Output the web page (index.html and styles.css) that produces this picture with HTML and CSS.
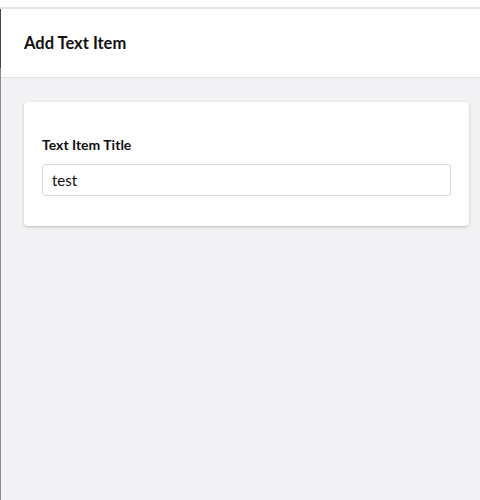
FILE: index.html
```html
<!DOCTYPE html>
<html lang="en">
<head>
    <meta charset="UTF-8">
    <meta name="viewport" content="width=device-width, initial-scale=1.0">
    <title>Add Text Item</title>
    <link rel="stylesheet" href="styles.css">
</head>
<body>
    <div class="top-strip"></div>
    <div class="shell">
        <div class="side-edge"></div>
        <main class="content">
            <header class="page-header">
                <h1 class="page-title">Add Text Item</h1>
            </header>
            <section class="page-body">
                <form class="card">
                    <label class="field-label" for="item-title">Text Item Title</label>
                    <input class="field-input" id="item-title" type="text" value="test">
                </form>
            </section>
        </main>
    </div>
</body>
</html>
```

FILE: styles.css
```css
html, body {
    height: 100%;
}
body {
    margin: 0;
    display: flex;
    flex-direction: column;
    background-color: #f2f2f4;
    font-family: Lato, 'Noto Sans', sans-serif;
    color: #111;
}
.top-strip {
    height: 7px;
    background-color: #fff;
    border-bottom: 2px solid #e6e6e8;
}
.shell {
    flex: 1;
    display: flex;
}
.side-edge {
    width: 1px;
    background: linear-gradient(#45425a 0, #45425a 59px, #8a8a8e 59px);
}
.content {
    flex: 1;
    display: flex;
    flex-direction: column;
}
.page-header {
    height: 68px;
    display: flex;
    align-items: center;
    padding-left: 23px;
    background-color: #fff;
    border-bottom: 1px solid #e0e0e2;
}
.page-title {
    margin: 0;
    font-size: 16.5px;
    font-weight: 700;
}
.page-body {
    padding: 24px 11px 0 23px;
}
.card {
    display: flex;
    flex-direction: column;
    padding: 34px 18px 30px 18px;
    background-color: #fff;
    border-radius: 4px;
    box-shadow: 0 1px 3px rgba(0, 0, 0, 0.22);
}
.field-label {
    font-size: 14px;
    font-weight: 700;
    margin-bottom: 11px;
}
.field-input {
    height: 32px;
    box-sizing: border-box;
    padding: 0 9px;
    border: 1px solid #dcdcde;
    border-radius: 3px;
    font-family: Lato, 'Noto Sans', sans-serif;
    font-size: 15px;
    color: #111;
    outline: none;
}
```
